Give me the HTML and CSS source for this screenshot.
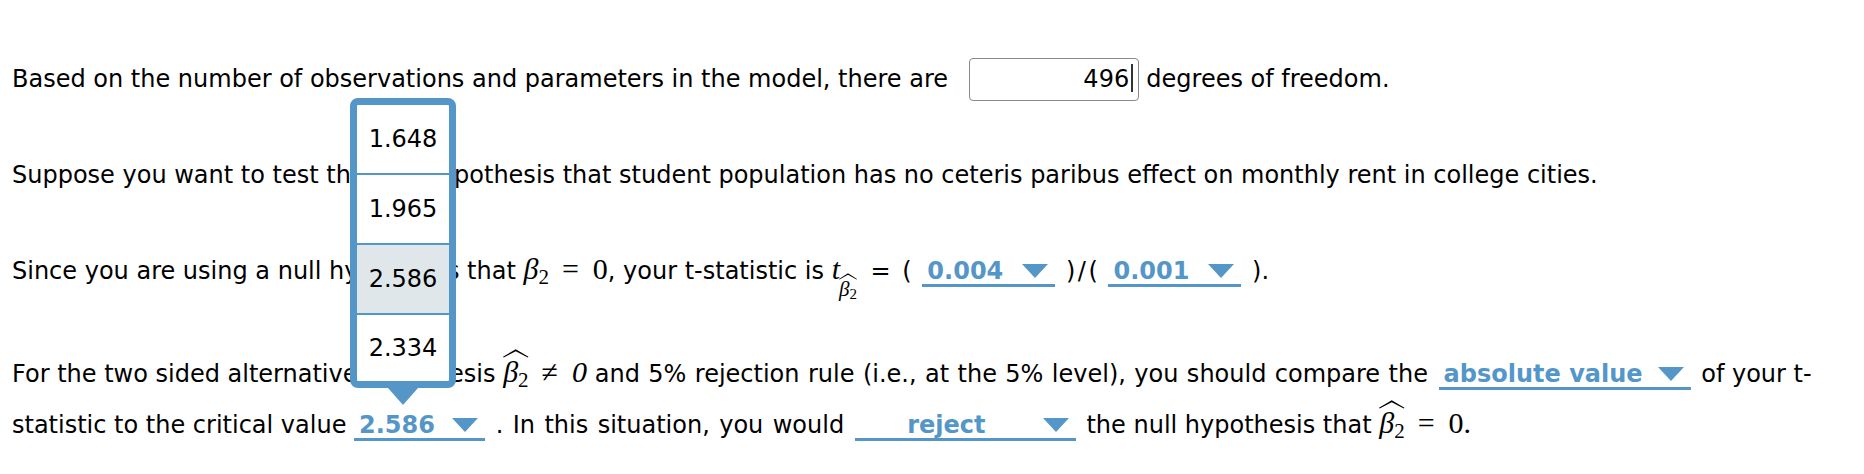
FILE: index.html
```html
<!DOCTYPE html>
<html>
<head>
<meta charset="utf-8">
<link rel="stylesheet" href="styles.css">
</head>
<body>
<div class="page">
  <p class="q l1">Based on the number of observations and parameters in the model, there are <span class="inp"><span class="inp-val">496</span><span class="caret"></span></span> degrees of freedom.</p>
  <p class="q l2">Suppose you want to test the null hypothesis that student population has no ceteris paribus effect on monthly rent in college cities.</p>
  <p class="q l3">Since you are using a null hypothesis that <span class="m"><span class="mi">β</span><span class="sb">2</span><span class="eq">=</span>0</span>, your t-statistic is <span class="m"><span class="mi">t</span><span class="tsub"><span class="wh"><span class="mi">β</span><span class="sb2">2</span><svg class="hat" viewBox="0 0 30 10" preserveAspectRatio="none"><path d="M0 8.6 L15 0.4 L30 8.6 L29.2 9.4 L15 2.6 L0.8 9.4 Z"/></svg></span></span></span> <span class="eqp">= (</span> <span class="dd dd-a"><span class="v">0.004</span><span class="tri"></span></span> <span class="mid">)/(</span> <span class="dd dd-b"><span class="v">0.001</span><span class="tri"></span></span> ).</p>
  <p class="q l4">For the two sided alternative hypothesis <span class="m m2"><span class="wh"><span class="mi">β</span><span class="sb">2</span><svg class="hat" viewBox="0 0 30 10" preserveAspectRatio="none"><path d="M0 8.6 L15 0.4 L30 8.6 L29.2 9.4 L15 2.6 L0.8 9.4 Z"/></svg></span><span class="eq">≠</span><span class="mi">0</span></span> <span class="ws-s">and 5% rejection rule (i.e., at the 5% level), you should compare the</span> <span class="dd dd-abs"><span class="v">absolute value</span><span class="tri"></span></span> of your t-<br>statistic to the critical value <span class="dd dd-crit"><span class="v">2.586</span><span class="tri"></span></span> <span class="ws">. In this situation, you would</span> <span class="dd dd-rej"><span class="v">reject</span><span class="tri"></span></span> the null hypothesis that <span class="m"><span class="wh"><span class="mi">β</span><span class="sb">2</span><svg class="hat" viewBox="0 0 30 10" preserveAspectRatio="none"><path d="M0 8.6 L15 0.4 L30 8.6 L29.2 9.4 L15 2.6 L0.8 9.4 Z"/></svg></span><span class="eq">=</span>0.</span></p>

  <div class="menu">
    <div class="opt">1.648</div>
    <div class="opt">1.965</div>
    <div class="opt sel">2.586</div>
    <div class="opt last">2.334</div>
  </div>
</div>
</body>
</html>
```
FILE: styles.css
```css
html, body {
  margin: 0;
  padding: 0;
  background: #ffffff;
}
body {
  font-family: "DejaVu Sans", Verdana, sans-serif;
  font-size: 24px;
  color: #000000;
}
.page {
  position: relative;
  width: 1864px;
  height: 474px;
  box-sizing: border-box;
  padding: 55px 0 0 12px;
  overflow: hidden;
}
.q {
  margin: 0;
  line-height: 48px;
  white-space: nowrap;
}
.l2, .l3 {
  margin-top: 48px;
}
.l4 {
  margin-top: 47px;
  line-height: 51px;
}
.ws {
  word-spacing: 1.8px;
}
.ws-s {
  word-spacing: 0.8px;
}

/* numeric input */
.inp {
  display: inline-block;
  box-sizing: border-box;
  width: 170px;
  height: 43px;
  margin: 0 0 0 13px;
  border: 1.5px solid #8a8a8a;
  border-radius: 4px;
  line-height: 40px;
  text-align: right;
  padding-right: 5px;
  vertical-align: baseline;
}
.caret {
  display: inline-block;
  width: 1.5px;
  height: 28px;
  margin-left: 2px;
  background: #333333;
  vertical-align: -5px;
}

/* math */
.m {
  font-family: "Liberation Serif", "Times New Roman", serif;
  font-size: 30px;
  line-height: 0;
}
.mi {
  font-style: italic;
}
.sb {
  font-size: 21px;
  vertical-align: -5px;
  line-height: 0;
}
.eq {
  margin: 0 14px 0 13px;
}
.wh {
  position: relative;
  display: inline-block;
  line-height: 1;
}
.hat {
  position: absolute;
  left: 0;
  top: -8px;
  width: 100%;
  height: 9px;
  fill: #000000;
}
.tsub {
  font-size: 21px;
  vertical-align: -17px;
  line-height: 0;
  margin-left: -1px;
  margin-right: 2px;
}
.tsub .hat {
  top: -6px;
  height: 7px;
}
.sb2 {
  font-size: 15px;
  vertical-align: -3px;
}
.eqp {
  margin-left: 4px;
  word-spacing: 4px;
}
.mid {
  letter-spacing: 2.5px;
  margin-right: -2.5px;
}

/* dropdowns */
.dd {
  display: inline-flex;
  align-items: baseline;
  box-sizing: border-box;
  border-bottom: 3px solid #5596c8;
  color: #5596c8;
  font-weight: bold;
  line-height: 26px;
  padding: 0 7px 0 5px;
  vertical-align: baseline;
  margin: 0 3px;
}
.dd .v {
  flex: 1;
  text-align: left;
}
.dd .tri {
  align-self: center;
  width: 0;
  height: 0;
  border-left: 13px solid transparent;
  border-right: 13px solid transparent;
  border-top: 14px solid #5596c8;
}
.dd-a { width: 133px; }
.dd-b { width: 133px; }
.dd-abs { width: 252px; }
.dd-crit { width: 131px; margin-left: 0; }
.dd-rej { width: 221px; }
.dd-rej .v { text-align: center; padding-right: 10px; }

/* open menu */
.menu {
  position: absolute;
  left: 350px;
  top: 98px;
  width: 106px;
  box-sizing: border-box;
  border: 7px solid #5596c8;
  border-radius: 8px;
  background: #ffffff;
}
.menu::after {
  content: "";
  position: absolute;
  left: calc(50% - 15px);
  top: calc(100% + 7px);
  width: 0;
  height: 0;
  border-left: 15px solid transparent;
  border-right: 15px solid transparent;
  border-top: 17px solid #5596c8;
}
.opt {
  height: 68px;
  display: flex;
  align-items: center;
  justify-content: center;
  border-bottom: 2px solid #5596c8;
  line-height: 1;
}
.opt.sel {
  background: #dfe7ea;
}
.opt.last {
  height: 66px;
  border-bottom: none;
}
```
